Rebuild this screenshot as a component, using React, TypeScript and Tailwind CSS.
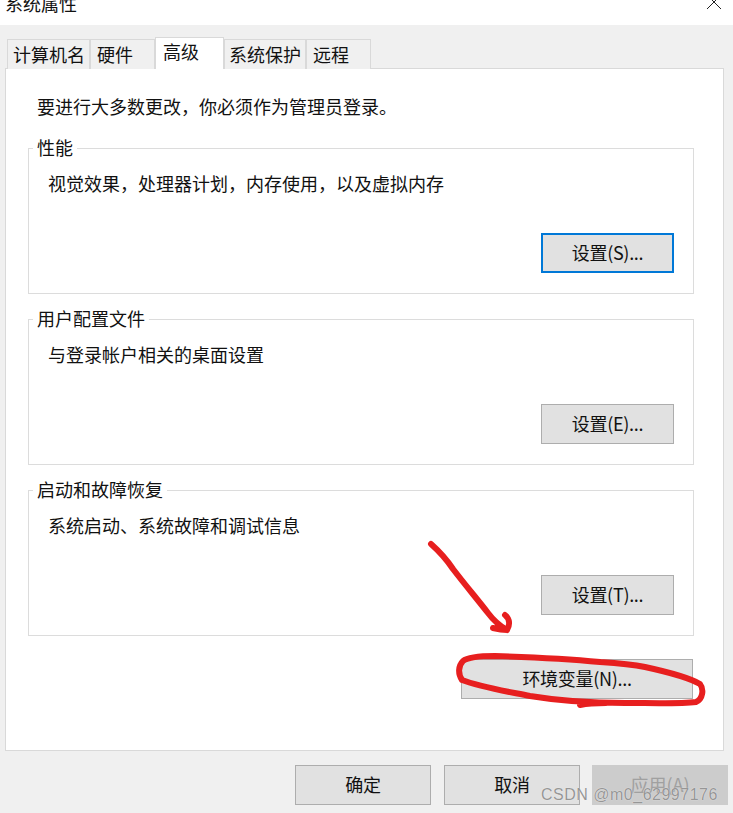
const font = "font-['Noto_Sans_CJK_SC','Liberation_Sans',sans-serif]"

const tabs = [
  { label: '计算机名', width: 'w-[83px]', pad: 'pl-[5px]' },
  { label: '硬件', width: 'w-[65px]', pad: 'pl-[6px]' },
  { label: '高级', width: 'w-[69px]', pad: 'pl-[7px]', active: true },
  { label: '系统保护', width: 'w-[82px]', pad: 'pl-[4px]' },
  { label: '远程', width: 'w-[65px]', pad: 'pl-[6px]' },
]

const groups = [
  { title: '性能', desc: '视觉效果，处理器计划，内存使用，以及虚拟内存', button: '设置(S)...', focused: true },
  { title: '用户配置文件', desc: '与登录帐户相关的桌面设置', button: '设置(E)...' },
  { title: '启动和故障恢复', desc: '系统启动、系统故障和调试信息', button: '设置(T)...' },
]

function Button({ label, focused, className }: { label: string; focused?: boolean; className?: string }) {
  return (
    <button
      className={`h-10 bg-[#e1e1e1] pb-[2px] text-[18px] leading-none tracking-[-0.3px] text-[#111] ${
        focused ? 'border-2 border-[#0078d7]' : 'border border-[#adadad]'
      } ${className ?? 'w-[133px]'}`}
    >
      {label}
    </button>
  )
}

function Group({ title, desc, button, focused }: { title: string; desc: string; button: string; focused?: boolean }) {
  return (
    <div className="relative h-[146px] w-[666px] border border-[#dcdcdc] pl-[19px] pr-[19px]">
      <span className="absolute left-[4px] top-[-14px] bg-white px-1 text-[18px] leading-[24px] text-[#111]">{title}</span>
      <p className="mt-[22px] text-[18px] leading-[24px] text-[#111]">{desc}</p>
      <div className="mt-[38px] flex justify-end">
        <Button label={button} focused={focused} />
      </div>
    </div>
  )
}

export default function App() {
  return (
    <div className={`relative h-[813px] w-[733px] overflow-hidden bg-[#f0f0f0] ${font}`}>
      {/* title bar, cut off at the top of the shot */}
      <div className="relative flex h-[25px] items-end justify-between bg-white pl-[5px] pr-[10px]">
        <span className="mb-[10px] text-[18px] leading-[24px] text-[#111]">系统属性</span>
        <svg width="16" height="16" viewBox="0 0 16 16" className="absolute right-[11px] top-[-6px]">
          <path d="M1 1 L15 15 M15 1 L1 15" stroke="#222" strokeWidth="1" fill="none" />
        </svg>
      </div>

      {/* tabs */}
      <div className="relative z-10 ml-[7px] mt-[12px] flex h-[32px] items-end">
        {tabs.map((t) =>
          t.active ? (
            <div
              key={t.label}
              className={`${t.width} ${t.pad} h-[32px] border border-b-0 border-[#d9d9d9] bg-white text-[18px] leading-[26px] text-[#111]`}
            >
              {t.label}
            </div>
          ) : (
            <div
              key={t.label}
              className={`${t.width} ${t.pad} h-[30px] border-t border-l border-r border-[#d9d9d9] bg-[#f0f0f0] pt-[1px] text-[18px] leading-[26px] text-[#111]`}
            >
              {t.label}
            </div>
          ),
        )}
      </div>

      {/* panel */}
      <div className="ml-[5px] mt-[-1px] h-[683px] w-[719px] border border-[#d9d9d9] bg-white pl-[22px]">
        <p className="mt-[25px] pl-[9px] text-[18px] leading-[24px] text-[#111]">要进行大多数更改，你必须作为管理员登录。</p>
        <div className="mt-[30px] flex flex-col gap-[25px]">
          {groups.map((g) => (
            <Group key={g.title} {...g} />
          ))}
        </div>
        <div className="mt-[23px] flex justify-end pr-[8px] mr-[22px]">
          <Button label="环境变量(N)..." className="w-[232px]" />
        </div>
      </div>

      {/* dialog buttons */}
      <div className="ml-[295px] mt-[14px] flex gap-[13px]">
        <Button label="确定" className="w-[136px]" />
        <Button label="取消" className="w-[136px]" />
        <button className="ml-[-1px] h-10 w-[136px] border border-[#cccccc] bg-[#cccccc] pb-[2px] text-[18px] leading-none text-[#a0a0a0]">
          应用(A)
        </button>
      </div>

      {/* red marker annotation */}
      <svg width="733" height="813" viewBox="0 0 733 813" className="pointer-events-none absolute left-0 top-0" fill="none">
        <path
          d="M431 544 C440 552 447 560 453 569 C466 586 478 600 488 613 C494 621 500 626 507 630 M505 615 C510 619 510 625 507 630 C502 630 497 629 493 628"
          stroke="#e71f1f"
          strokeWidth="6"
          strokeLinecap="round"
          strokeLinejoin="round"
        />
        <path
          d="M600 662 C570 659 530 657 495 656 C480 656 468 657 463 661 C458 666 458 674 462 680 C480 687 505 691 530 696 C560 701 590 703 625 703 C650 703 680 704 696 702 C703 699 704 689 700 684 C688 677 668 672 645 667 C630 664 615 663 600 662 M580 705 C590 703 600 703 606 703"
          stroke="#e71f1f"
          strokeWidth="6"
          strokeLinecap="round"
          strokeLinejoin="round"
        />
      </svg>

      {/* watermark */}
      <span className="absolute left-[541px] top-[785px] font-['Liberation_Sans',sans-serif] text-[16px] leading-[20px] tracking-[0.5px] text-[#969696] [text-shadow:0_0_1px_#ffffff]">
        CSDN @m0_62997176
      </span>
    </div>
  )
}
